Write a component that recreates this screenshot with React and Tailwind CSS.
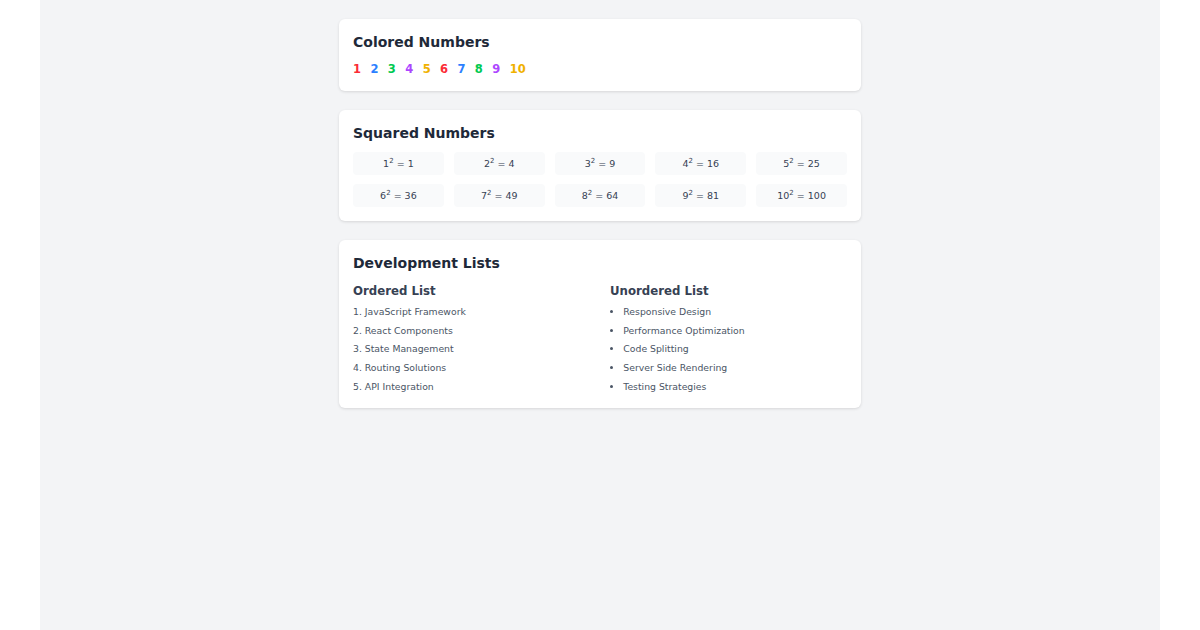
import React from 'react';

const colors = [
    'text-red-500',
    'text-blue-500',
    'text-green-500',
    'text-purple-500',
    'text-yellow-500',
];

const ordered = [
    'JavaScript Framework',
    'React Components',
    'State Management',
    'Routing Solutions',
    'API Integration',
];

const unordered = [
    'Responsive Design',
    'Performance Optimization',
    'Code Splitting',
    'Server Side Rendering',
    'Testing Strategies',
];

function Card({ title, children }) {
    return (
        <div className="bg-white rounded-md shadow-[0_1px_3px_rgba(0,0,0,0.12)] p-[14px]">
            <h2 className="text-[14px] leading-[18px] font-bold text-gray-800 mb-[10px]">{title}</h2>
            {children}
        </div>
    );
}

export default function App() {
    const numbers = Array.from({ length: 10 }, (_, i) => i + 1);

    return (
        <div className="min-h-screen bg-white" style={{ fontFamily: '"DejaVu Sans", sans-serif' }}>
            <div className="max-w-[1120px] mx-auto bg-gray-100 min-h-screen pt-[19px]">
                <div className="w-[522px] mx-auto flex flex-col gap-[19px]">
                    {/* colored numbers */}
                    <Card title="Colored Numbers">
                        <div className="flex gap-[9.4px] text-[11.5px] leading-[15px] pt-px font-bold">
                            {numbers.map((n) => (
                                <span key={n} className={colors[(n - 1) % 5]}>{n}</span>
                            ))}
                        </div>
                    </Card>

                    {/* squares grid */}
                    <Card title="Squared Numbers">
                        <div className="grid grid-cols-5 gap-x-[10px] gap-y-[9px]">
                            {numbers.map((n) => (
                                <div key={n} className="bg-gray-50 rounded h-[23px] pt-px flex items-center justify-center text-[9.5px] text-gray-700">
                                    <span>
                                        {n}<sup className="text-[7px]">2</sup> = {n * n}
                                    </span>
                                </div>
                            ))}
                        </div>
                    </Card>

                    {/* lists */}
                    <Card title="Development Lists">
                        <div className="grid grid-cols-2 gap-x-[20px]">
                            <div>
                                <h3 className="text-[11.75px] leading-[18px] font-bold text-gray-700 mb-[5px]">Ordered List</h3>
                                <ol className="list-decimal list-inside text-[9.3px] text-gray-600 leading-[14px] flex flex-col gap-[4.7px]">
                                    {ordered.map((item) => (
                                        <li key={item}>{item}</li>
                                    ))}
                                </ol>
                            </div>
                            <div>
                                <h3 className="text-[11.75px] leading-[18px] font-bold text-gray-700 mb-[5px]">Unordered List</h3>
                                <ul className="list-disc list-inside text-[9.3px] text-gray-600 leading-[14px] flex flex-col gap-[4.7px]">
                                    {unordered.map((item) => (
                                        <li key={item}>{item}</li>
                                    ))}
                                </ul>
                            </div>
                        </div>
                    </Card>
                </div>
            </div>
        </div>
    );
}
